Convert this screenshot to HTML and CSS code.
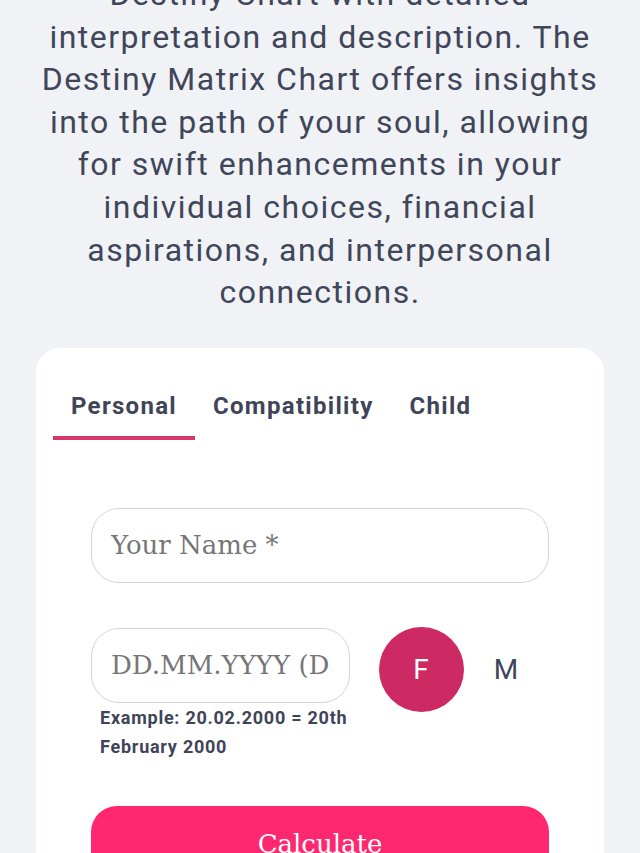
FILE: index.html
```html
<!DOCTYPE html>
<html lang="en">
<head>
<meta charset="utf-8">
<title>Destiny Matrix</title>
<link rel="stylesheet" href="styles.css">
</head>
<body>
<main class="page">
  <p class="intro">Destiny Chart with detailed interpretation and description. The Destiny Matrix Chart offers insights into the path of your soul, allowing for swift enhancements in your individual choices, financial aspirations, and interpersonal connections.</p>
  <section class="card">
    <nav class="tabs">
      <span class="tab active">Personal</span>
      <span class="tab">Compatibility</span>
      <span class="tab">Child</span>
    </nav>
    <form class="form">
      <input class="field name" type="text" placeholder="Your Name *">
      <div class="row">
        <div class="date-col">
          <input class="field date" type="text" placeholder="DD.MM.YYYY (DD.MM.YYYY)">
          <p class="hint">Example: 20.02.2000 = 20th February 2000</p>
        </div>
        <div class="gender">
          <span class="g active">F</span>
          <span class="g">M</span>
        </div>
      </div>
      <button class="calc" type="button">Calculate</button>
    </form>
  </section>
</main>
</body>
</html>
```
FILE: styles.css
```css
* { box-sizing: border-box; }
html, body { margin: 0; padding: 0; }
body {
  background: #f0f2f5;
  font-family: Roboto, "Noto Sans", Arial, sans-serif;
  color: #3f4559;
  height: 853px;
  overflow: hidden;
}
.page {
  padding: 0 36px;
}
.intro {
  margin: -27px -10px 0;
  font-size: 32px;
  line-height: 42.6px;
  letter-spacing: 1.5px;
  text-align: center;
  color: #40465a;
}
.card {
  margin-top: 34px;
  background: #ffffff;
  border-radius: 24px;
  padding: 20px 17px 0;
  height: 600px;
}
.tabs {
  display: flex;
}
.tab {
  font-size: 24px;
  font-weight: 700;
  line-height: 28px;
  letter-spacing: 1.3px;
  padding: 24px 18px 16px;
  border-bottom: 4px solid transparent;
  color: #3f4559;
}
.tab.active {
  border-bottom-color: #d9366c;
}
.form {
  padding: 68px 38px 0;
  display: flex;
  flex-direction: column;
}
.field {
  height: 75px;
  border: 1.5px solid #d4d4d6;
  border-radius: 28px;
  padding: 0 20px 0 19px;
  font-family: "DejaVu Serif", "Liberation Serif", serif;
  font-size: 26px;
  color: #333;
  background: #fff;
  outline: none;
}
.field::placeholder {
  color: #767676;
}
.name { width: 100%; }
.row {
  margin-top: 45px;
  display: flex;
  align-items: flex-start;
}
.date-col {
  width: 259px;
}
.date { width: 259px; }
.hint {
  margin: 0;
  padding-left: 9px;
  font-size: 18px;
  font-weight: 700;
  line-height: 29px;
  letter-spacing: 0.75px;
  color: #3f4559;
}
.gender {
  display: flex;
  align-items: center;
  margin-left: 29px;
  margin-top: -1px;
}
.g {
  width: 85px;
  height: 85px;
  border-radius: 50%;
  display: flex;
  align-items: center;
  justify-content: center;
  font-size: 28px;
  letter-spacing: 1px;
  color: #3f4559;
}
.g.active {
  background: #cd2962;
  color: #ffffff;
}
.calc {
  margin-top: 45px;
  height: 80px;
  border: none;
  border-radius: 26px;
  background: #fe2870;
  color: #ffffff;
  font-family: "DejaVu Serif", "Liberation Serif", serif;
  font-size: 26px;
  padding: 23px 0 0;
  text-align: center;
  display: flex;
  justify-content: center;
  align-items: flex-start;
}
```
